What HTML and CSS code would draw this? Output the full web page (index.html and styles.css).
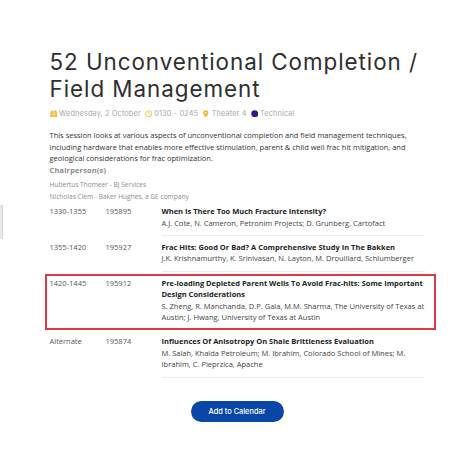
FILE: index.html
```html
<!DOCTYPE html>
<html lang="en">
<head>
<meta charset="utf-8">
<title>52 Unconventional Completion / Field Management</title>
<link rel="stylesheet" href="styles.css">
</head>
<body>
<div class="edge-strip"></div>
<main class="session">
  <h1 class="session-title">52 Unconventional Completion / Field Management</h1>
  <div class="meta">
    <span class="meta-item">
      <svg class="ico" viewBox="0 0 10 10"><rect x="0.5" y="1.5" width="9" height="8" rx="1" fill="#f2b632"/><rect x="2" y="0.3" width="1.2" height="2.4" fill="#f2b632"/><rect x="6.8" y="0.3" width="1.2" height="2.4" fill="#f2b632"/><rect x="1.5" y="3.6" width="7" height="0.6" fill="#fff" opacity="0.7"/><rect x="1.5" y="5.6" width="7" height="0.6" fill="#fff" opacity="0.7"/><rect x="3.6" y="3.6" width="0.6" height="5" fill="#fff" opacity="0.7"/><rect x="5.8" y="3.6" width="0.6" height="5" fill="#fff" opacity="0.7"/></svg>
      Wednesday, 2 October
    </span>
    <span class="meta-item">
      <svg class="ico" viewBox="0 0 10 10"><circle cx="5" cy="5" r="4.2" fill="none" stroke="#f2b632" stroke-width="1.1"/><path d="M5 2.6V5.2L6.6 6.2" fill="none" stroke="#f2b632" stroke-width="1"/></svg>
      0130 - 0245
    </span>
    <span class="meta-item">
      <svg class="ico" viewBox="0 0 10 10"><path d="M5 0.4C2.9 0.4 1.5 1.9 1.5 3.8C1.5 6.3 5 9.8 5 9.8C5 9.8 8.5 6.3 8.5 3.8C8.5 1.9 7.1 0.4 5 0.4Z" fill="#f2b632"/><circle cx="5" cy="3.8" r="1.3" fill="#fff"/></svg>
      Theater 4
    </span>
    <span class="meta-item">
      <svg class="ico" viewBox="0 0 10 10"><circle cx="5" cy="5" r="4.6" fill="#3a1587"/></svg>
      Technical
    </span>
  </div>
  <p class="description">This session looks at various aspects of unconventional completion and field management techniques, including hardware that enables more effective stimulation, parent &amp; child well frac hit mitigation, and geological considerations for frac optimization.</p>
  <h2 class="chair-heading">Chairperson(s)</h2>
  <ul class="chairs">
    <li>Hubertus Thomeer - BJ Services</li>
    <li>Nicholas Clem - Baker Hughes, a GE company</li>
  </ul>

  <div class="papers">
    <div class="paper">
      <div class="cell time">1330-1355</div>
      <div class="cell code">195895</div>
      <div class="cell details">
        <div class="paper-title">When Is There Too Much Fracture Intensity?</div>
        <div class="authors">A.J. Cote, N. Cameron, Petronim Projects; D. Grunberg, Cartofact</div>
      </div>
    </div>
    <div class="paper">
      <div class="cell time">1355-1420</div>
      <div class="cell code">195927</div>
      <div class="cell details">
        <div class="paper-title">Frac Hits: Good Or Bad? A Comprehensive Study In The Bakken</div>
        <div class="authors">J.K. Krishnamurthy, K. Srinivasan, N. Layton, M. Drouillard, Schlumberger</div>
      </div>
    </div>
    <div class="paper highlighted">
      <div class="cell time">1420-1445</div>
      <div class="cell code">195912</div>
      <div class="cell details">
        <div class="paper-title">Pre-loading Depleted Parent Wells To Avoid Frac-hits: Some Important Design Considerations</div>
        <div class="authors">S. Zheng, R. Manchanda, D.P. Gala, M.M. Sharma, The University of Texas at Austin; J. Hwang, University of Texas at Austin</div>
      </div>
    </div>
    <div class="paper">
      <div class="cell time">Alternate</div>
      <div class="cell code">195874</div>
      <div class="cell details">
        <div class="paper-title">Influences Of Anisotropy On Shale Brittleness Evaluation</div>
        <div class="authors">M. Salah, Khalda Petroleum; M. Ibrahim, Colorado School of Mines; M. Ibrahim, C. Pieprzica, Apache</div>
      </div>
    </div>
  </div>

  <div class="actions">
    <button class="btn-calendar" type="button">Add to Calendar</button>
  </div>
</main>
</body>
</html>
```
FILE: styles.css
```css
* { box-sizing: border-box; }

html, body {
  margin: 0;
  padding: 0;
  background: #ffffff;
}

body {
  font-family: "Open Sans", "Liberation Sans", sans-serif;
  color: #333;
}

.edge-strip {
  position: fixed;
  left: 0;
  top: 205px;
  width: 3px;
  height: 34px;
  background: #e9e9e9;
  border-right: 1px solid #d2d2d2;
}

.session {
  width: 375px;
  margin: 0 auto;
  padding-top: 49px;
}

.session-title {
  margin: 0;
  font-family: Inter, "DejaVu Sans", sans-serif;
  font-weight: 400;
  font-size: 22.4px;
  line-height: 26.6px;
  color: #2f2f2f;
  letter-spacing: 0.95px;
}

.meta {
  display: flex;
  align-items: center;
  gap: 4px;
  margin-top: 6px;
  height: 11px;
  font-family: Inter, "DejaVu Sans", sans-serif;
  font-size: 7.4px;
  color: #a9a9a9;
  letter-spacing: 0.1px;
}

.meta-item {
  display: inline-flex;
  align-items: center;
  gap: 2px;
}

.ico {
  width: 7.5px;
  height: 7.5px;
  flex: none;
}

.description {
  margin: 11px 0 0;
  font-size: 7.5px;
  line-height: 11.5px;
  color: #333;
}

.chair-heading {
  margin: 0;
  font-size: 7.4px;
  line-height: 11.5px;
  font-weight: 700;
  color: #8a8a8a;
  letter-spacing: 0.2px;
}

.chairs {
  list-style: none;
  margin: 3px 0 0;
  padding: 0;
  font-size: 6.6px;
  line-height: 12px;
  color: #8d8d8d;
}

.papers {
  display: flex;
  flex-direction: column;
}

.paper {
  display: grid;
  grid-template-columns: 56px 56px 1fr;
  font-size: 7.5px;
  line-height: 11.4px;
  position: relative;
}

.cell {
  padding: 6px 0;
}

.paper:first-child .cell {
  padding-top: 3px;
}

.time, .code {
  color: #555;
}

.details {
  border-bottom: 1px solid #ececec;
}

.paper-title {
  font-weight: 700;
  color: #222;
}

.authors {
  color: #444;
}

.highlighted::after {
  content: "";
  position: absolute;
  left: -5px;
  right: -11px;
  top: 2px;
  bottom: 0;
  border: 2px solid #dc3a42;
  pointer-events: none;
}

.actions {
  display: flex;
  justify-content: center;
  margin-top: 23px;
}

.btn-calendar {
  width: 93px;
  height: 21px;
  border: none;
  border-radius: 11px;
  background: #0a46a8;
  color: #fff;
  font-family: Inter, "DejaVu Sans", sans-serif;
  font-size: 7.4px;
  font-weight: 500;
  cursor: pointer;
}
```
